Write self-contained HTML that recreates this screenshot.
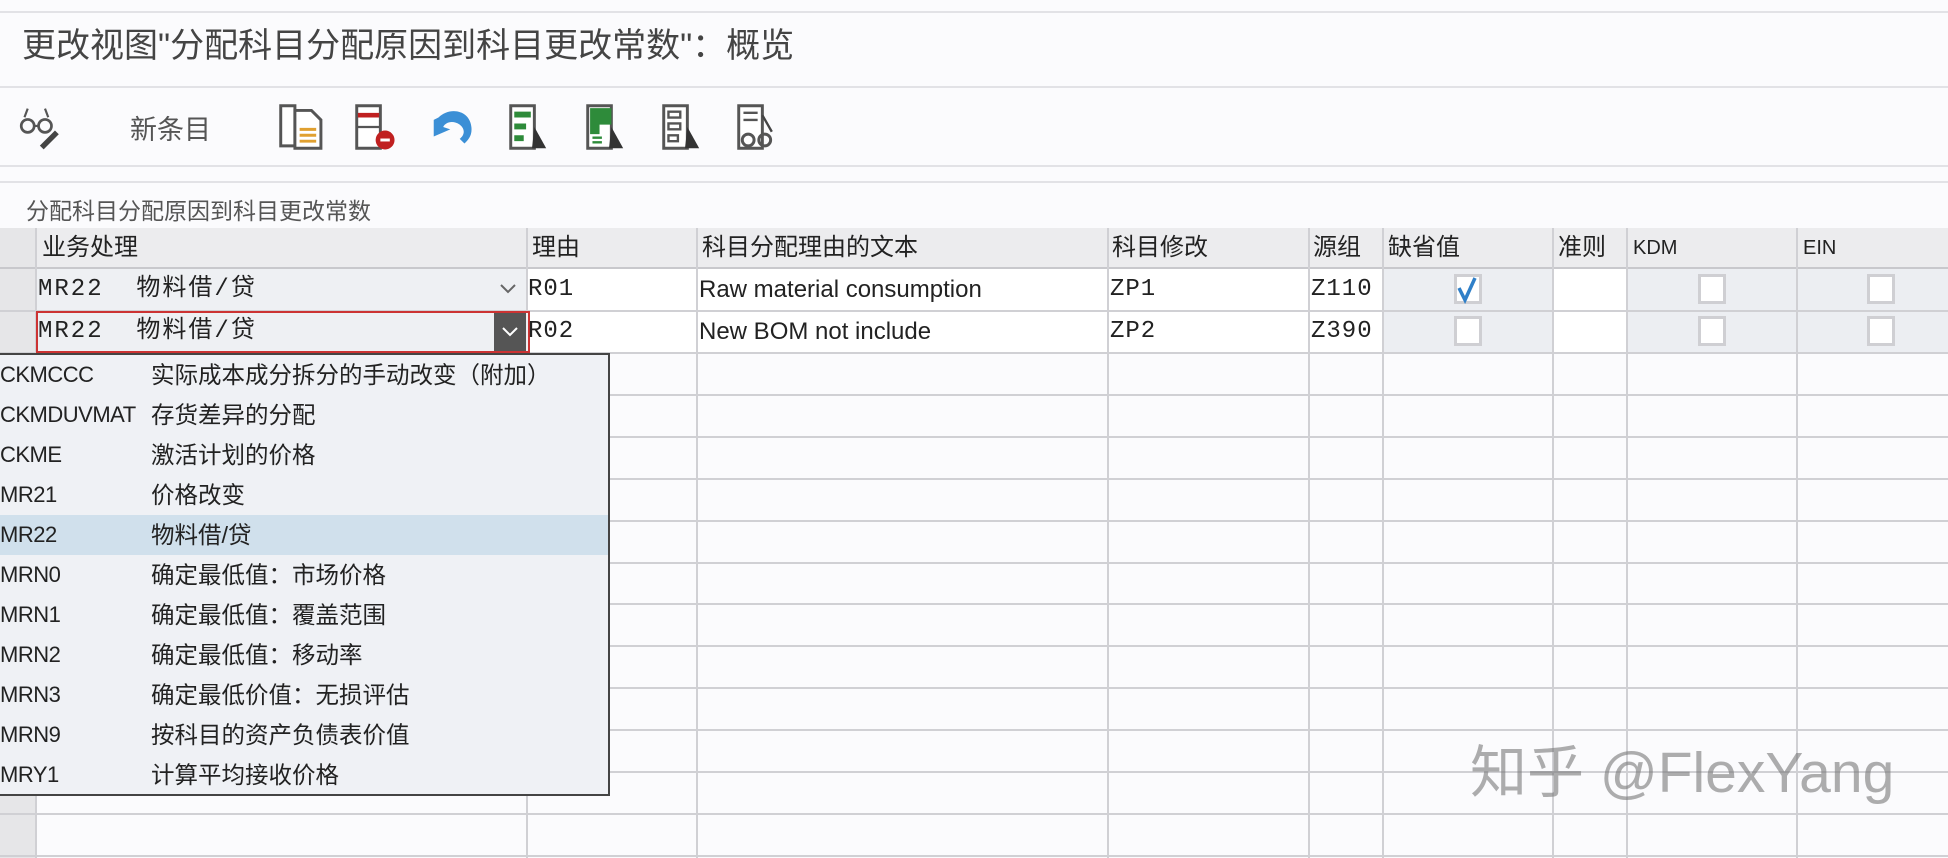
<!DOCTYPE html>
<html><head><meta charset="utf-8"><style>
*{margin:0;padding:0;box-sizing:border-box}
body{width:1948px;height:858px;overflow:hidden;background:#fbfbfd;font-family:"Liberation Sans","Noto Sans CJK SC",sans-serif;color:#222;position:relative}
.a{position:absolute}
.hl{position:absolute;left:0;width:1948px;height:2px;background:#e2e2e6}
.vl{position:absolute;width:2px;background:#d0d0d4}
.rl{position:absolute;left:0;width:1948px;height:2px;background:#d0d0d4}
.t{position:absolute;font-size:24px;white-space:nowrap;line-height:42px}
.m{font-family:"Liberation Mono","Noto Sans CJK SC",monospace;font-size:24px;letter-spacing:1px}
.cb{position:absolute;width:28px;height:30px;background:#fff;border:3px solid #cfcfd3}
.dd .t{font-size:23.5px;line-height:40px}
.dd .c{font-size:22px;letter-spacing:-0.5px}
</style></head><body>
<div class="hl" style="top:11px"></div>
<div class="a" style="left:22px;top:23px;font-size:34px;color:#444;line-height:46px;white-space:nowrap">更改视图"分配科目分配原因到科目更改常数"：概览</div>
<div class="hl" style="top:86px"></div>
<svg class="a" style="left:18px;top:102px" width="54" height="50" viewBox="0 0 50 46"><circle cx="9" cy="22" r="6" fill="none" stroke="#555" stroke-width="2.5"/><circle cx="25" cy="22" r="6" fill="none" stroke="#555" stroke-width="2.5"/><path d="M15 22h4M6 14l3-8M28 14l-3-8" stroke="#555" stroke-width="2"/><path d="M22 42l14-14" stroke="#444" stroke-width="5"/></svg>
<div class="a" style="left:130px;top:108px;font-size:27px;color:#555">新条目</div>
<svg class="a" style="left:276px;top:101px" width="52" height="52" viewBox="0 0 44 44"><path d="M4 4h12v34H4z" fill="#fff" stroke="#555" stroke-width="2.5"/><path d="M16 8h14l8 8v24H16z" fill="#fff" stroke="#555" stroke-width="2.5"/><path d="M20 24h14M20 29h14M20 34h14" stroke="#e0a030" stroke-width="2.5"/></svg>
<svg class="a" style="left:352px;top:101px" width="52" height="52" viewBox="0 0 44 44"><path d="M4 4h20v36H4z" fill="#fff" stroke="#555" stroke-width="2.5"/><path d="M5 12h18" stroke="#c02020" stroke-width="4"/><path d="M5 22h18" stroke="#555" stroke-width="2"/><circle cx="28" cy="33" r="8" fill="#c02020"/><path d="M24 33h8" stroke="#fff" stroke-width="2.5"/></svg>
<svg class="a" style="left:429px;top:101px" width="52" height="52" viewBox="0 0 44 44"><path d="M8 14c10-10 28-6 28 10c0 6-3 9-6 12l-4-4c4-3 5-8 0-12c-6-4-12-2-14 2l6 2l-14 6l0-14z" fill="#3b8fd6"/></svg>
<svg class="a" style="left:506px;top:101px" width="52" height="52" viewBox="0 0 44 44"><path d="M4 4h20v36H4z" fill="#fff" stroke="#555" stroke-width="2.5"/><path d="M7 9h14v5H7zM7 19h10v5H7zM7 29h8v5H7z" fill="#2e8b3a"/><path d="M24 22l10 18h-12z" fill="#333"/></svg>
<svg class="a" style="left:583px;top:101px" width="52" height="52" viewBox="0 0 44 44"><path d="M4 4h20v36H4z" fill="#fff" stroke="#555" stroke-width="2.5"/><path d="M6 6h18v14H14v8H6z" fill="#2e8b3a"/><path d="M8 31h8M8 35h8" stroke="#2e8b3a" stroke-width="2"/><path d="M24 22l10 18h-12z" fill="#333"/></svg>
<svg class="a" style="left:659px;top:101px" width="52" height="52" viewBox="0 0 44 44"><path d="M4 4h20v36H4z" fill="#fff" stroke="#555" stroke-width="2.5"/><path d="M8 9h10v5H8zM8 19h10v5H8zM8 29h8v5H8z" fill="none" stroke="#555" stroke-width="2"/><path d="M24 22l10 18h-12z" fill="#333"/></svg>
<svg class="a" style="left:734px;top:101px" width="52" height="52" viewBox="0 0 44 44"><path d="M4 4h20v36H4z" fill="#fff" stroke="#555" stroke-width="2.5"/><path d="M8 10h12M8 16h12" stroke="#555" stroke-width="2"/><circle cx="12" cy="33" r="5" fill="none" stroke="#555" stroke-width="2.5"/><circle cx="26" cy="33" r="5" fill="none" stroke="#555" stroke-width="2.5"/><path d="M24 12l8 14" stroke="#444" stroke-width="2"/></svg>
<div class="hl" style="top:165px"></div>
<div class="hl" style="top:181px"></div>
<div class="a" style="left:26px;top:192px;font-size:23px;color:#555;white-space:nowrap">分配科目分配原因到科目更改常数</div>
<div class="a" style="left:0;top:228px;width:1948px;height:40px;background:#ececee"></div>
<div class="a" style="left:0;top:228px;width:36px;height:630px;background:#e6e6e8"></div>
<div class="a" style="left:36px;top:269px;width:491px;height:84px;background:#eef0f3"></div>
<div class="a" style="left:1383px;top:269px;width:170px;height:84px;background:#eceef2"></div>
<div class="a" style="left:1627px;top:269px;width:321px;height:84px;background:#eceef2"></div>
<div class="a" style="left:527px;top:269px;width:856px;height:84px;background:#fff"></div>
<div class="a" style="left:1553px;top:269px;width:74px;height:84px;background:#fff"></div>
<div class="rl" style="top:267px;background:#c8c8cc"></div>
<div class="rl" style="top:310px"></div><div class="rl" style="top:352px"></div><div class="rl" style="top:394px"></div><div class="rl" style="top:436px"></div><div class="rl" style="top:478px"></div><div class="rl" style="top:520px"></div><div class="rl" style="top:562px"></div><div class="rl" style="top:603px"></div><div class="rl" style="top:645px"></div><div class="rl" style="top:687px"></div><div class="rl" style="top:729px"></div><div class="rl" style="top:771px"></div><div class="rl" style="top:813px"></div><div class="rl" style="top:855px"></div>
<div class="vl" style="left:35px;top:228px;height:630px"></div>
<div class="vl" style="left:526px;top:228px;height:630px"></div>
<div class="vl" style="left:696px;top:228px;height:630px"></div>
<div class="vl" style="left:1107px;top:228px;height:630px"></div>
<div class="vl" style="left:1308px;top:228px;height:630px"></div>
<div class="vl" style="left:1382px;top:228px;height:630px"></div>
<div class="vl" style="left:1552px;top:228px;height:630px"></div>
<div class="vl" style="left:1626px;top:228px;height:630px"></div>
<div class="vl" style="left:1796px;top:228px;height:630px"></div>
<div class="t" style="left:42px;top:228px;font-size:24px;line-height:40px">业务处理</div>
<div class="t" style="left:532px;top:228px;font-size:24px;line-height:40px">理由</div>
<div class="t" style="left:702px;top:228px;font-size:24px;line-height:40px">科目分配理由的文本</div>
<div class="t" style="left:1112px;top:228px;font-size:24px;line-height:40px">科目修改</div>
<div class="t" style="left:1313px;top:228px;font-size:24px;line-height:40px">源组</div>
<div class="t" style="left:1388px;top:228px;font-size:24px;line-height:40px">缺省值</div>
<div class="t" style="left:1558px;top:228px;font-size:24px;line-height:40px">准则</div>
<div class="t" style="left:1633px;top:228px;font-size:20px;line-height:40px">KDM</div>
<div class="t" style="left:1803px;top:228px;font-size:20px;line-height:40px">EIN</div>
<div class="t m" style="left:38px;top:269px;letter-spacing:2px">MR22&nbsp;&nbsp;物料借/贷</div>
<svg class="a" style="left:498px;top:282px" width="20" height="14"><path d="M3 3l7 7l7-7" fill="none" stroke="#666" stroke-width="2"/></svg>
<div class="t m" style="left:528px;top:269px">R01</div>
<div class="t" style="left:699px;top:269px">Raw material consumption</div>
<div class="t m" style="left:1110px;top:269px">ZP1</div>
<div class="t m" style="left:1311px;top:269px">Z110</div>
<div class="cb" style="left:1454px;top:274px"></div>
<svg class="a" style="left:1456px;top:274px" width="24" height="30"><path d="M3 14l6 12l10-22" fill="none" stroke="#2f7fc8" stroke-width="3.5"/></svg>
<div class="cb" style="left:1698px;top:274px"></div>
<div class="cb" style="left:1867px;top:274px"></div>
<div class="a" style="left:36px;top:311px;width:494px;height:42px;border:2px solid #c33"></div>
<div class="a" style="left:38px;top:313px;width:490px;height:38px;background:#eef0f3"></div>
<div class="t m" style="left:38px;top:311px;letter-spacing:2px">MR22&nbsp;&nbsp;物料借/贷</div>
<div class="a" style="left:494px;top:313px;width:32px;height:38px;background:#555"></div>
<svg class="a" style="left:500px;top:325px" width="20" height="14"><path d="M3 3l7 7l7-7" fill="none" stroke="#fff" stroke-width="2"/></svg>
<div class="t m" style="left:528px;top:311px">R02</div>
<div class="t" style="left:699px;top:311px">New BOM not include</div>
<div class="t m" style="left:1110px;top:311px">ZP2</div>
<div class="t m" style="left:1311px;top:311px">Z390</div>
<div class="cb" style="left:1454px;top:316px"></div>
<div class="cb" style="left:1698px;top:316px"></div>
<div class="cb" style="left:1867px;top:316px"></div>
<div class="a dd" style="left:-2px;top:353px;width:612px;height:443px;background:#eff1f5;border:2px solid #444">
<div class="a" style="left:0;top:160px;width:608px;height:40px;background:#d0e0ec"></div>
<div class="t c" style="left:0;top:0">CKMCCC</div><div class="t" style="left:151px;top:0">实际成本成分拆分的手动改变（附加）</div>
<div class="t c" style="left:0;top:40px">CKMDUVMAT</div><div class="t" style="left:151px;top:40px">存货差异的分配</div>
<div class="t c" style="left:0;top:80px">CKME</div><div class="t" style="left:151px;top:80px">激活计划的价格</div>
<div class="t c" style="left:0;top:120px">MR21</div><div class="t" style="left:151px;top:120px">价格改变</div>
<div class="t c" style="left:0;top:160px">MR22</div><div class="t" style="left:151px;top:160px">物料借/贷</div>
<div class="t c" style="left:0;top:200px">MRN0</div><div class="t" style="left:151px;top:200px">确定最低值：市场价格</div>
<div class="t c" style="left:0;top:240px">MRN1</div><div class="t" style="left:151px;top:240px">确定最低值：覆盖范围</div>
<div class="t c" style="left:0;top:280px">MRN2</div><div class="t" style="left:151px;top:280px">确定最低值：移动率</div>
<div class="t c" style="left:0;top:320px">MRN3</div><div class="t" style="left:151px;top:320px">确定最低价值：无损评估</div>
<div class="t c" style="left:0;top:360px">MRN9</div><div class="t" style="left:151px;top:360px">按科目的资产负债表价值</div>
<div class="t c" style="left:0;top:400px">MRY1</div><div class="t" style="left:151px;top:400px">计算平均接收价格</div>
</div>
<div class="a" style="left:1470px;top:740px;font-size:57px;color:rgba(120,120,120,.6);white-space:nowrap;line-height:66px">知乎 @FlexYang</div>
</body></html>
